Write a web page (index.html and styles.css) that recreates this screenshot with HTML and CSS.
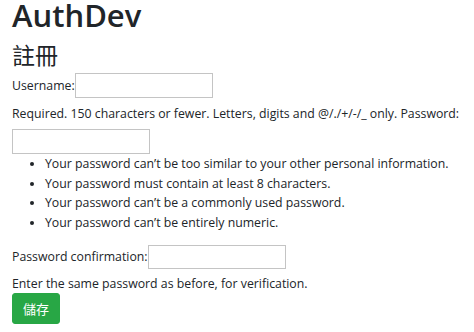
FILE: index.html
```html
<!DOCTYPE html>
<html>
<head>
<meta charset="utf-8">
<link rel="stylesheet" href="styles.css">
</head>
<body>
<div class="container">
  <h1 class="brand">AuthDev</h1>
  <h2 class="title">註冊</h2>
  <form class="form">
    <div class="row row-first"><label>Username:</label><input class="field" type="text"></div>
    <div class="help help-first">Required. 150 characters or fewer. Letters, digits and @/./+/-/_ only. Password:</div>
    <div class="row row-pass"><input class="field" type="password"></div>
    <ul class="rules">
      <li>Your password can’t be too similar to your other personal information.</li>
      <li>Your password must contain at least 8 characters.</li>
      <li>Your password can’t be a commonly used password.</li>
      <li>Your password can’t be entirely numeric.</li>
    </ul>
    <div class="row"><label>Password confirmation:</label><input class="field" type="password"></div>
    <div class="help help-last">Enter the same password as before, for verification.</div>
    <button class="btn" type="button">儲存</button>
  </form>
</div>
</body>
</html>
```

FILE: styles.css
```css
html, body {
  margin: 0;
  padding: 0;
  background: #fff;
}
body {
  font-family: "Open Sans", "Noto Sans CJK TC", sans-serif;
  font-size: 12.3px;
  line-height: 19.7px;
  color: #212529;
}
.container {
  padding: 0 12px;
}
.brand {
  margin: 0;
  font-size: 31px;
  font-weight: 600;
  line-height: 30.6px;
}
.title {
  margin: 9.4px 0 0 0;
  font-size: 23px;
  font-weight: 400;
  line-height: 28px;
  font-family: "Noto Sans CJK TC", sans-serif;
}
.row {
  display: flex;
  align-items: center;
  height: 24.5px;
  margin: 0;
  white-space: nowrap;
}
.row-first {
  margin-top: 5.3px;
}
.row-pass {
  margin-top: 5.6px;
}
.field {
  box-sizing: border-box;
  width: 138px;
  height: 24.5px;
  margin: 0;
  border: 1px solid #c4c4c4;
  padding: 0 4px;
  background: #fff;
}
.help {
  white-space: nowrap;
}
.help-first {
  margin-top: 6.4px;
}
.help-last {
  margin-top: 5.4px;
}
.rules {
  margin: 0 0 12.2px 0;
  padding-left: 33px;
  line-height: 19.6px;
  white-space: nowrap;
}
.btn {
  display: block;
  margin-top: -0.8px;
  background: #28a745;
  color: #fff;
  border: 1px solid #28a745;
  border-radius: 3px;
  width: 48px;
  height: 31px;
  font-size: 13px;
  font-family: "Noto Sans CJK TC", sans-serif;
  padding: 0;
}
```
